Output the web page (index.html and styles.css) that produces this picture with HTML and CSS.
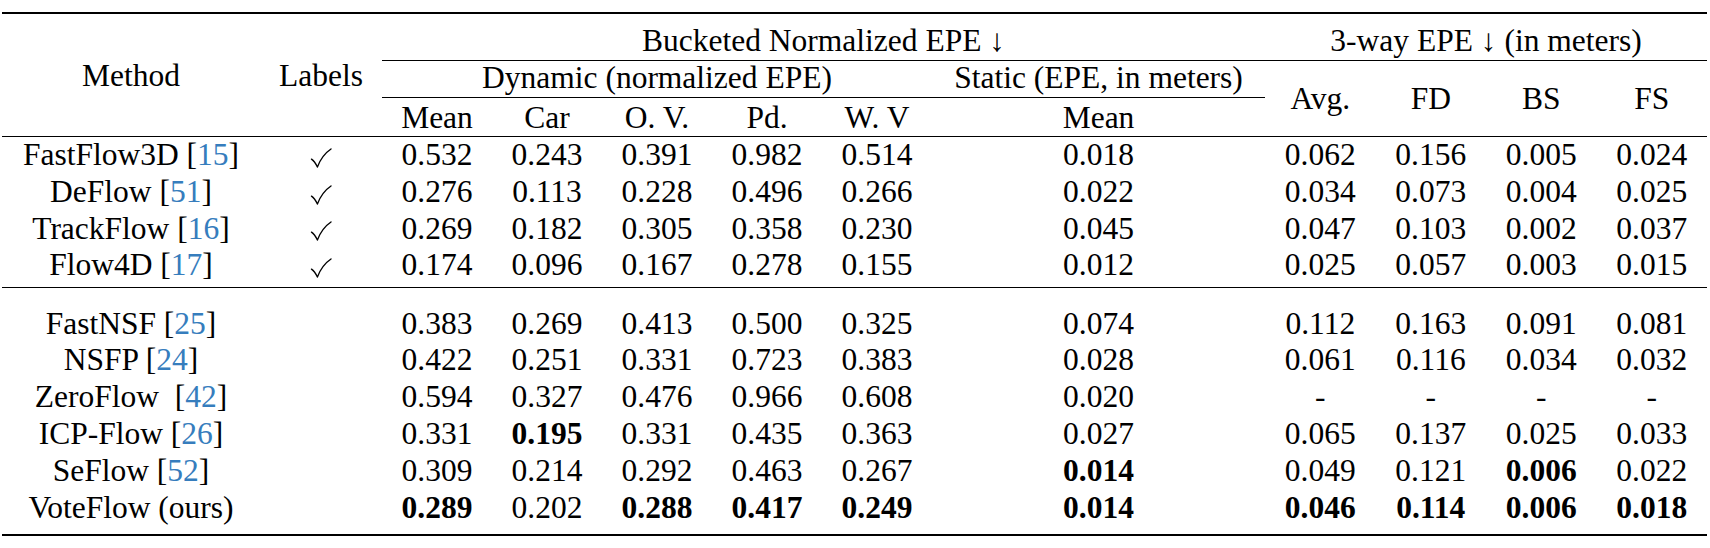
FILE: index.html
```html
<!DOCTYPE html>
<html lang="en">
<head>
<meta charset="utf-8">
<title>Results table</title>
<link rel="stylesheet" href="styles.css">
</head>
<body>
<div class="page">
<table class="results">
  <colgroup>
    <col class="col-method">
    <col class="col-labels">
    <col class="col-num"><col class="col-num"><col class="col-num"><col class="col-num"><col class="col-num">
    <col class="col-static">
    <col class="col-way"><col class="col-way"><col class="col-way"><col class="col-way">
  </colgroup>
  <thead>
    <tr class="h1">
      <th rowspan="3" class="span">Method</th>
      <th rowspan="3" class="span">Labels</th>
      <th colspan="6" class="cmid">Bucketed Normalized EPE <span class="arrow">↓</span></th>
      <th colspan="4" class="cmid">3-way EPE <span class="arrow">↓</span> (in meters)</th>
    </tr>
    <tr class="h2">
      <th colspan="5" class="cmid">Dynamic (normalized EPE)</th>
      <th class="cmid">Static (EPE, in meters)</th>
      <th rowspan="2" class="span">Avg.</th>
      <th rowspan="2" class="span">FD</th>
      <th rowspan="2" class="span">BS</th>
      <th rowspan="2" class="span">FS</th>
    </tr>
    <tr class="h3">
      <th>Mean</th><th>Car</th><th>O. V.</th><th>Pd.</th><th>W. V</th><th>Mean</th>
    </tr>
  </thead>
  <tbody>
    <tr class="rule"><td colspan="12"><div class="rule-line"></div></td></tr>
    <tr>
      <td>FastFlow3D [<span class="cite">15</span>]</td>
      <td><svg class="check" viewBox="0 0 22 20" width="22" height="20"><path d="M1.5 11.2 C3.6 12.6 5.6 15.4 7.4 19 C10.4 11.2 15 5 21 1"/></svg></td>
      <td>0.532</td><td>0.243</td><td>0.391</td><td>0.982</td><td>0.514</td>
      <td>0.018</td>
      <td>0.062</td><td>0.156</td><td>0.005</td><td>0.024</td>
    </tr>
    <tr>
      <td>DeFlow [<span class="cite">51</span>]</td>
      <td><svg class="check" viewBox="0 0 22 20" width="22" height="20"><path d="M1.5 11.2 C3.6 12.6 5.6 15.4 7.4 19 C10.4 11.2 15 5 21 1"/></svg></td>
      <td>0.276</td><td>0.113</td><td>0.228</td><td>0.496</td><td>0.266</td>
      <td>0.022</td>
      <td>0.034</td><td>0.073</td><td>0.004</td><td>0.025</td>
    </tr>
    <tr>
      <td>TrackFlow [<span class="cite">16</span>]</td>
      <td><svg class="check" viewBox="0 0 22 20" width="22" height="20"><path d="M1.5 11.2 C3.6 12.6 5.6 15.4 7.4 19 C10.4 11.2 15 5 21 1"/></svg></td>
      <td>0.269</td><td>0.182</td><td>0.305</td><td>0.358</td><td>0.230</td>
      <td>0.045</td>
      <td>0.047</td><td>0.103</td><td>0.002</td><td>0.037</td>
    </tr>
    <tr>
      <td>Flow4D [<span class="cite">17</span>]</td>
      <td><svg class="check" viewBox="0 0 22 20" width="22" height="20"><path d="M1.5 11.2 C3.6 12.6 5.6 15.4 7.4 19 C10.4 11.2 15 5 21 1"/></svg></td>
      <td>0.174</td><td>0.096</td><td>0.167</td><td>0.278</td><td>0.155</td>
      <td>0.012</td>
      <td>0.025</td><td>0.057</td><td>0.003</td><td>0.015</td>
    </tr>
    <tr class="rule gap"><td colspan="12"><div class="rule-line"></div></td></tr>
    <tr>
      <td>FastNSF [<span class="cite">25</span>]</td>
      <td></td>
      <td>0.383</td><td>0.269</td><td>0.413</td><td>0.500</td><td>0.325</td>
      <td>0.074</td>
      <td>0.112</td><td>0.163</td><td>0.091</td><td>0.081</td>
    </tr>
    <tr>
      <td>NSFP [<span class="cite">24</span>]</td>
      <td></td>
      <td>0.422</td><td>0.251</td><td>0.331</td><td>0.723</td><td>0.383</td>
      <td>0.028</td>
      <td>0.061</td><td>0.116</td><td>0.034</td><td>0.032</td>
    </tr>
    <tr>
      <td>ZeroFlow&nbsp; [<span class="cite">42</span>]</td>
      <td></td>
      <td>0.594</td><td>0.327</td><td>0.476</td><td>0.966</td><td>0.608</td>
      <td>0.020</td>
      <td>-</td><td>-</td><td>-</td><td>-</td>
    </tr>
    <tr>
      <td>ICP-Flow [<span class="cite">26</span>]</td>
      <td></td>
      <td>0.331</td><td class="best">0.195</td><td>0.331</td><td>0.435</td><td>0.363</td>
      <td>0.027</td>
      <td>0.065</td><td>0.137</td><td>0.025</td><td>0.033</td>
    </tr>
    <tr>
      <td>SeFlow [<span class="cite">52</span>]</td>
      <td></td>
      <td>0.309</td><td>0.214</td><td>0.292</td><td>0.463</td><td>0.267</td>
      <td class="best">0.014</td>
      <td>0.049</td><td>0.121</td><td class="best">0.006</td><td>0.022</td>
    </tr>
    <tr class="last">
      <td>VoteFlow (ours)</td>
      <td></td>
      <td class="best">0.289</td><td>0.202</td><td class="best">0.288</td><td class="best">0.417</td><td class="best">0.249</td>
      <td class="best">0.014</td>
      <td class="best">0.046</td><td class="best">0.114</td><td class="best">0.006</td><td class="best">0.018</td>
    </tr>
  </tbody>
</table>
</div>
</body>
</html>
```

FILE: styles.css
```css
html, body {
  margin: 0;
  padding: 0;
  background: #ffffff;
}

body {
  font-family: "Liberation Serif", "Times New Roman", serif;
  color: #000000;
}

.page {
  padding: 12px 0 0 2px;
}

.results {
  border-collapse: separate;
  border-spacing: 0;
  table-layout: fixed;
  width: 1705px;
  font-size: 31.5px;
  border-top: 2px solid #000;
  border-bottom: 2px solid #000;
}

.col-method { width: 258px; }
.col-labels { width: 122px; }
.col-num { width: 110px; }
.col-static { width: 333px; }
.col-way { width: 110.5px; }

.results th,
.results td {
  padding: 0;
  text-align: center;
  font-weight: normal;
  white-space: nowrap;
  vertical-align: middle;
}

.results thead th {
  line-height: 31px;
}

.results .h1 th {
  padding: 10.5px 0 4.5px;
}

.results .h2 th {
  padding: 0.5px 0 4.5px;
}

.results .h3 th {
  padding: 3.5px 0 3.5px;
}

.results thead th.span {
  padding: 0;
}

.results th.cmid {
  border-bottom: 1px solid #000;
}

.results tbody td {
  line-height: 36.8px;
}

.results .rule td {
  line-height: 0;
  font-size: 0;
  height: 0;
}

.rule-line {
  height: 0;
  border-top: 1px solid #000;
}

.results .rule.gap .rule-line {
  margin: 3px 0 17.5px;
}

.results .last td {
  padding-bottom: 8px;
}

.results td.best {
  font-weight: bold;
}

.cite {
  color: #367dbd;
}

.check {
  display: inline-block;
  vertical-align: middle;
  fill: none;
  stroke: #000;
  stroke-width: 1.4;
  stroke-linecap: round;
  stroke-linejoin: round;
}
```
